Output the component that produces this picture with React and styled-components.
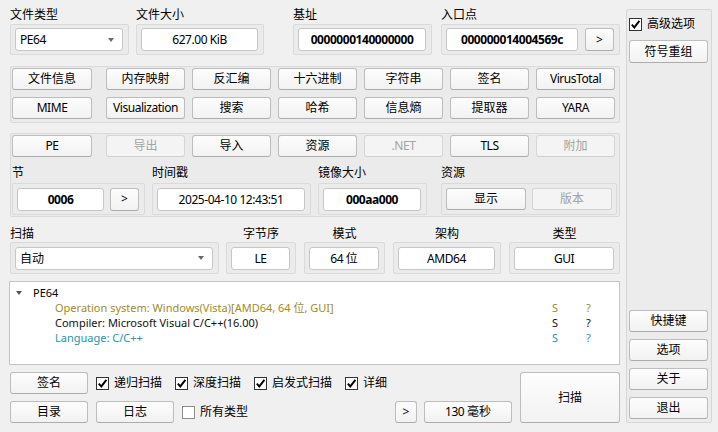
import React from "react";
import styled, { createGlobalStyle } from "styled-components";

const GlobalStyle = createGlobalStyle`
  html, body { margin: 0; padding: 0; background: #f0f0f0; }
  body {
    font-family: "Noto Sans", "Noto Sans CJK SC", sans-serif;
    font-size: 12px;
    color: #000;
  }
  * { box-sizing: border-box; }
`;

const Lat = styled.span`
  letter-spacing: -0.45px;
`;

const CJK = /([\u3000-\u9fff\uff00-\uffef]+)/;

function T({ children }) {
  return String(children)
    .split(CJK)
    .map((part, i) =>
      part === "" ? null : CJK.test(part) ? (
        <React.Fragment key={i}>{part}</React.Fragment>
      ) : (
        <Lat key={i}>{part}</Lat>
      )
    );
}

const Window = styled.div`
  width: 718px;
  height: 432px;
  display: flex;
  padding-left: 10px;
  background: #f0f0f0;
  overflow: hidden;
`;

const Main = styled.div`
  width: 610px;
  padding-top: 7px;
  display: flex;
  flex-direction: column;
`;

const Row = styled.div`
  display: flex;
  margin-top: ${(p) => p.$mt || 0}px;
`;

const Field = styled.div`
  width: ${(p) => p.$w}px;
  margin-left: ${(p) => p.$ml || 0}px;
  display: flex;
  flex-direction: column;
`;

const Label = styled.div`
  height: 16px;
  line-height: 16px;
  margin-bottom: ${(p) => p.$mb ?? 1}px;
  text-align: ${(p) => (p.$center ? "center" : "left")};
  white-space: nowrap;
`;

const Group = styled.div`
  height: ${(p) => p.$h || 31}px;
  display: flex;
  align-items: center;
  gap: ${(p) => p.$gap ?? 6}px;
  padding: 0 5px 0 4px;
  border: 1px solid #dadada;
  border-radius: 2px;
  background: #ebebeb;
`;

const Input = styled.div`
  flex: 1;
  height: 23px;
  line-height: 21px;
  background: #fff;
  border: 1px solid #c6c6c6;
  border-radius: 3px;
  text-align: center;
  font-weight: ${(p) => (p.$bold ? 700 : 400)};
  white-space: nowrap;
  overflow: hidden;
`;

const Combo = styled.div`
  flex: 1;
  height: 23px;
  display: flex;
  align-items: center;
  justify-content: space-between;
  padding: 0 8px 0 4px;
  background: #fff;
  border: 1px solid #c6c6c6;
  border-radius: 3px;
`;

const Arrow = styled.span`
  width: 0;
  height: 0;
  border-left: 3.5px solid transparent;
  border-right: 3.5px solid transparent;
  border-top: 4px solid #6a6a6a;
`;

const Btn = styled.button`
  flex: none;
  width: ${(p) => (p.$w ? p.$w + "px" : "100%")};
  height: ${(p) => p.$h || 22}px;
  padding: 0;
  margin: 0;
  font: inherit;
  line-height: 1;
  color: ${(p) => (p.disabled ? "#a3a3a3" : "#000")};
  border: 1px solid ${(p) => (p.disabled ? "#d6d6d6" : "#bdbdbd")};
  border-bottom-color: ${(p) => (p.disabled ? "#d0d0d0" : "#acacac")};
  border-radius: 3px;
  background: ${(p) =>
    p.disabled ? "#f4f4f4" : "linear-gradient(#fdfdfd, #f2f2f2)"};
  white-space: nowrap;
`;

const ButtonPanel = styled.div`
  margin-top: 11px;
  height: 57px;
  padding: 1px 0 0 1px;
  border: 1px solid #dadada;
  border-radius: 2px;
  background: #ebebeb;
`;

const ButtonGrid = styled.div`
  display: grid;
  grid-template-columns: 94px 86px 86px 86px 86px 86px 80px;
  grid-auto-rows: 22px;
  row-gap: 7px;
  & > button { width: 79px; }
  & > button:first-child, & > button:nth-child(8) { width: 80px; }
`;

const PEPanel = styled.div`
  margin-top: 10px;
  height: 84px;
  padding: 1px 2px 0 1px;
  border: 1px solid #dadada;
  border-radius: 2px;
  background: #ebebeb;
`;

const SubRow = styled.div`
  display: flex;
  margin-top: 8px;
`;

const TreeBox = styled.div`
  margin-top: 7px;
  margin-left: -1px;
  width: 611px;
  height: 84px;
  background: #fff;
  border: 1px solid #c4c4c4;
  padding-top: 3px;
`;

const TreeRow = styled.div`
  display: grid;
  grid-template-columns: 1fr 34px 33px;
  height: 15px;
  line-height: 15px;
  font-size: 11px;
  color: ${(p) => p.$color || "#000"};
  white-space: nowrap;
  & ${Lat} { letter-spacing: 0; }
`;

const TreeName = styled.div`
  display: flex;
  align-items: center;
  padding-left: ${(p) => p.$indent}px;
`;

const Twisty = styled.span`
  width: 0;
  height: 0;
  margin-right: 11px;
  border-left: 3.5px solid transparent;
  border-right: 3.5px solid transparent;
  border-top: 4px solid #555;
`;

const Bottom = styled.div`
  margin-top: 7px;
  display: grid;
  grid-template-columns: 502px 100px;
  grid-template-rows: 22px 22px;
  column-gap: 8px;
  row-gap: 7px;
`;

const BottomLine = styled.div`
  display: flex;
  align-items: center;
`;

const Check = styled.label`
  display: flex;
  align-items: center;
  gap: 5px;
  margin-left: ${(p) => p.$ml || 0}px;
  white-space: nowrap;
  line-height: 16px;
`;

const Box = styled.span`
  width: 13px;
  height: 13px;
  display: flex;
  align-items: center;
  justify-content: center;
  background: #fff;
  border: 1px solid ${(p) => (p.$on ? "#333" : "#8c8c8c")};
`;

const RightPanel = styled.div`
  margin-left: 6px;
  margin-top: 9px;
  width: 86px;
  height: 414px;
  display: flex;
  flex-direction: column;
  padding: 0 3px 3px 2px;
  border: 1px solid #d6d6d6;
  border-radius: 2px;
  background: #ececec;
`;

const SideStack = styled.div`
  margin-top: auto;
  display: flex;
  flex-direction: column;
  gap: 7px;
`;

const Spacer = styled.div`
  margin-left: auto;
`;

function CheckBox({ on, children, ml }) {
  return (
    <Check $ml={ml}>
      <Box $on={on}>
        {on && (
          <svg width="11" height="11" viewBox="0 0 11 11">
            <path d="M1.8 5.6 L4.3 8.4 L9.4 1.8" fill="none" stroke="#000" strokeWidth="1.9" />
          </svg>
        )}
      </Box>
      <span>{children}</span>
    </Check>
  );
}

const row2a = ["文件信息", "内存映射", "反汇编", "十六进制", "字符串", "签名", "VirusTotal"];
const row2b = ["MIME", "Visualization", "搜索", "哈希", "信息熵", "提取器", "YARA"];
const peButtons = [
  ["PE", false], ["导出", true], ["导入", false], ["资源", false],
  [".NET", true], ["TLS", false], ["附加", true],
];

const tree = [
  { text: "Operation system: Windows(Vista)[AMD64, 64 位, GUI]", color: "#a08c1e" },
  { text: "Compiler: Microsoft Visual C/C++(16.00)", color: "#111" },
  { text: "Language: C/C++", color: "#2596ab" },
];

export default function App() {
  return (
    <>
      <GlobalStyle />
      <Window>
        <Main>
          <Row>
            <Field $w={119}>
              <Label>文件类型</Label>
              <Group>
                <Combo>
                  <T>PE64</T>
                  <Arrow />
                </Combo>
              </Group>
            </Field>
            <Field $w={128} $ml={7}>
              <Label>文件大小</Label>
              <Group>
                <Input><T>627.00 KiB</T></Input>
              </Group>
            </Field>
            <Field $w={139} $ml={29}>
              <Label>基址</Label>
              <Group>
                <Input $bold><T>0000000140000000</T></Input>
              </Group>
            </Field>
            <Field $w={179} $ml={9}>
              <Label>入口点</Label>
              <Group $gap={7}>
                <Input $bold><T>000000014004569c</T></Input>
                <Btn $w={29} $h={23}>&gt;</Btn>
              </Group>
            </Field>
          </Row>

          <ButtonPanel>
            <ButtonGrid>
              {row2a.map((t) => (
                <Btn key={t}><T>{t}</T></Btn>
              ))}
              {row2b.map((t) => (
                <Btn key={t}><T>{t}</T></Btn>
              ))}
            </ButtonGrid>
          </ButtonPanel>

          <PEPanel>
            <ButtonGrid>
              {peButtons.map(([t, d]) => (
                <Btn key={t} disabled={d}><T>{t}</T></Btn>
              ))}
            </ButtonGrid>
            <SubRow>
              <Field $w={133}>
                <Label $mb={2}>节</Label>
                <Group $h={32}>
                  <Input $bold><T>0006</T></Input>
                  <Btn $w={29} $h={23}>&gt;</Btn>
                </Group>
              </Field>
              <Field $w={159} $ml={7}>
                <Label $mb={2}>时间戳</Label>
                <Group $h={32}>
                  <Input><T>2025-04-10 12:43:51</T></Input>
                </Group>
              </Field>
              <Field $w={109} $ml={7}>
                <Label $mb={2}>镜像大小</Label>
                <Group $h={32}>
                  <Input $bold><T>000aa000</T></Input>
                </Group>
              </Field>
              <Field $w={176} $ml={14}>
                <Label $mb={2}>资源</Label>
                <Group $h={32} $gap={6}>
                  <Btn $w={80}>显示</Btn>
                  <Btn $w={80} disabled>版本</Btn>
                </Group>
              </Field>
            </SubRow>
          </PEPanel>

          <Row $mt={9}>
            <Field $w={209}>
              <Label $mb={0}>扫描</Label>
              <Group $h={32}>
                <Combo>
                  <span>自动</span>
                  <Arrow />
                </Combo>
              </Group>
            </Field>
            <Field $w={70} $ml={7}>
              <Label $mb={0} $center>字节序</Label>
              <Group $h={32}>
                <Input><T>LE</T></Input>
              </Group>
            </Field>
            <Field $w={81} $ml={8}>
              <Label $mb={0} $center>模式</Label>
              <Group $h={32}>
                <Input><T>64 位</T></Input>
              </Group>
            </Field>
            <Field $w={108} $ml={8}>
              <Label $mb={0} $center>架构</Label>
              <Group $h={32}>
                <Input><T>AMD64</T></Input>
              </Group>
            </Field>
            <Field $w={111} $ml={8}>
              <Label $mb={0} $center>类型</Label>
              <Group $h={32}>
                <Input><T>GUI</T></Input>
              </Group>
            </Field>
          </Row>

          <TreeBox>
            <TreeRow>
              <TreeName $indent={6}>
                <Twisty />
                <T>PE64</T>
              </TreeName>
              <span />
              <span />
            </TreeRow>
            {tree.map((r) => (
              <TreeRow key={r.text} $color={r.color}>
                <TreeName $indent={45}>
                  <span><T>{r.text}</T></span>
                </TreeName>
                <span>S</span>
                <span>?</span>
              </TreeRow>
            ))}
          </TreeBox>

          <Bottom>
            <BottomLine>
              <Btn $w={78}>签名</Btn>
              <CheckBox on ml={8}>递归扫描</CheckBox>
              <CheckBox on ml={13}>深度扫描</CheckBox>
              <CheckBox on ml={13}>启发式扫描</CheckBox>
              <CheckBox on ml={13}>详细</CheckBox>
            </BottomLine>
            <Btn style={{ gridRow: "1 / span 2", gridColumn: 2 }} $h={51}>扫描</Btn>
            <BottomLine>
              <Btn $w={78}>目录</Btn>
              <Btn $w={78} style={{ marginLeft: 8 }}>日志</Btn>
              <CheckBox ml={8}>所有类型</CheckBox>
              <Spacer />
              <Btn $w={22}>&gt;</Btn>
              <Btn $w={88} style={{ marginLeft: 7 }}><T>130 毫秒</T></Btn>
            </BottomLine>
          </Bottom>
        </Main>

        <RightPanel>
          <Row $mt={6}>
            <CheckBox on>高级选项</CheckBox>
          </Row>
          <Row $mt={8}>
            <Btn $w={79} $h={23}>符号重组</Btn>
          </Row>
          <SideStack>
            <Btn $w={79}>快捷键</Btn>
            <Btn $w={79}>选项</Btn>
            <Btn $w={79}>关于</Btn>
            <Btn $w={79}>退出</Btn>
          </SideStack>
        </RightPanel>
      </Window>
    </>
  );
}
